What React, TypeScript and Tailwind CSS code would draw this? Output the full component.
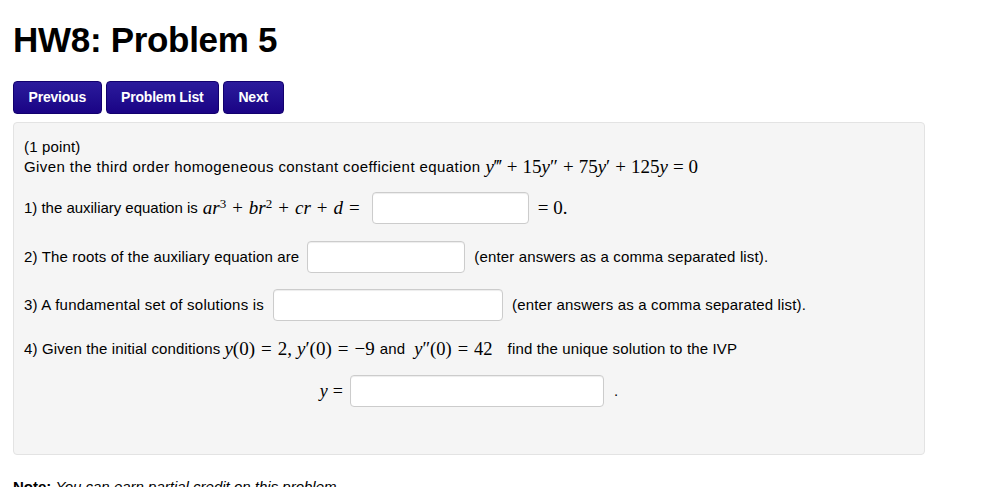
import React from "react";

const sans = { fontFamily: '"Liberation Sans", Arial, Helvetica, sans-serif' };

function M({ children, className = "" }: { children: React.ReactNode; className?: string }) {
  return (
    <span
      className={"leading-[20px] whitespace-nowrap " + className}
      style={{ fontFamily: '"Liberation Serif", "Times New Roman", serif' }}
    >
      {children}
    </span>
  );
}

const I = ({ children }: { children: React.ReactNode }) => <i className="italic">{children}</i>;
const Op5 = ({ c }: { c: string }) => <span className="mx-[5px]">{c}</span>;
const Op6 = ({ c }: { c: string }) => <span className="mx-[6px]">{c}</span>;

function Input({ w }: { w: string }) {
  return (
    <span
      className={
        "inline-block align-middle h-[32px] bg-white border border-[#cccccc] rounded-[4px] shadow-[inset_0_1px_1px_rgba(0,0,0,0.075)] " +
        w
      }
    />
  );
}

function Btn({ label }: { label: string }) {
  return (
    <span className="flex h-[33px] items-center px-[14.5px] rounded-[4px] border border-[#12006e] bg-gradient-to-b from-[#2b1a9c] to-[#1a0385] text-white text-[14px] font-bold tracking-[-0.2px]">
      {label}
    </span>
  );
}

export default function App() {
  return (
    <div className="bg-white text-black min-h-[487px] overflow-hidden px-[13px]" style={sans}>
      <h1 className="mt-[20px] text-[35px] leading-[40px] font-bold tracking-[-0.3px]">HW8: Problem 5</h1>
      <div className="mt-[21px] flex gap-[4px]">
        <Btn label="Previous" />
        <Btn label="Problem List" />
        <Btn label="Next" />
      </div>
      <div className="mt-[8px] w-[912px] h-[333px] bg-[#f5f5f5] border border-[#e3e3e3] rounded-[4px] pt-[14px] px-[10px] text-[15px] leading-[20px] tracking-[0.15px]">
        <div className="h-[20px]">(1 point)</div>
        <div className="flex items-center h-[20px]">
          <span className="tracking-[0.42px]">Given the third order homogeneous constant coefficient equation</span>
          <M className="ml-[5px] text-[19px] tracking-normal">
            <I>y</I>‴<Op5 c="+" />15<I>y</I>″<Op5 c="+" />75<I>y</I>′<Op5 c="+" />125<I>y</I>
            <Op5 c="=" />0
          </M>
        </div>

        <div className="mt-[15px] flex items-center h-[32px]">
          <span className="tracking-[-0.02px]">1) the auxiliary equation is</span>
          <M className="ml-[5px] text-[19px] tracking-normal">
            <I>ar</I>
            <sup className="text-[13px]">3</sup>
            <Op6 c="+" />
            <I>br</I>
            <sup className="text-[13px]">2</sup>
            <Op6 c="+" />
            <I>cr</I>
            <Op6 c="+" />
            <I>d</I>
            <span className="ml-[6px]">=</span>
          </M>
          <span className="ml-[12px] flex">
            <Input w="w-[157px]" />
          </span>
          <M className="ml-[9px] text-[19px] tracking-normal">= 0.</M>
        </div>

        <div className="mt-[17px] flex items-center h-[32px]">
          <span>2) The roots of the auxiliary equation are</span>
          <span className="ml-[8px] flex">
            <Input w="w-[158px]" />
          </span>
          <span className="ml-[9px]">(enter answers as a comma separated list).</span>
        </div>

        <div className="mt-[16px] flex items-center h-[32px]">
          <span className="tracking-[0.23px]">3) A fundamental set of solutions is</span>
          <span className="ml-[9px] flex">
            <Input w="w-[230px]" />
          </span>
          <span className="ml-[9px]">(enter answers as a comma separated list).</span>
        </div>

        <div className="mt-[18px] flex items-center h-[20px]">
          <span>4) Given the initial conditions</span>
          <M className="ml-[4px] text-[19px] tracking-normal">
            <I>y</I>(0)<Op6 c="=" />2,<span className="ml-[5px]" />
            <I>y</I>′(0)<Op6 c="=" />−9
          </M>
          <span className="ml-[5px]">and</span>
          <M className="ml-[9px] text-[18.5px] tracking-normal">
            <I>y</I>″(0)<Op6 c="=" />42
          </M>
          <span className="ml-[15px]">find the unique solution to the IVP</span>
        </div>

        <div className="mt-[16px] flex items-center justify-center h-[32px]">
          <M className="text-[18px] tracking-normal">
            <I>y</I>
            <Op5 c="=" />
          </M>
          <span className="ml-[2px] flex">
            <Input w="w-[254px]" />
          </span>
          <span className="ml-[10px]">.</span>
        </div>
      </div>
      <div className="mt-[22px] text-[15px] leading-[20px]">
        <b>Note:</b> <i>You can earn partial credit on this problem.</i>
      </div>
    </div>
  );
}
